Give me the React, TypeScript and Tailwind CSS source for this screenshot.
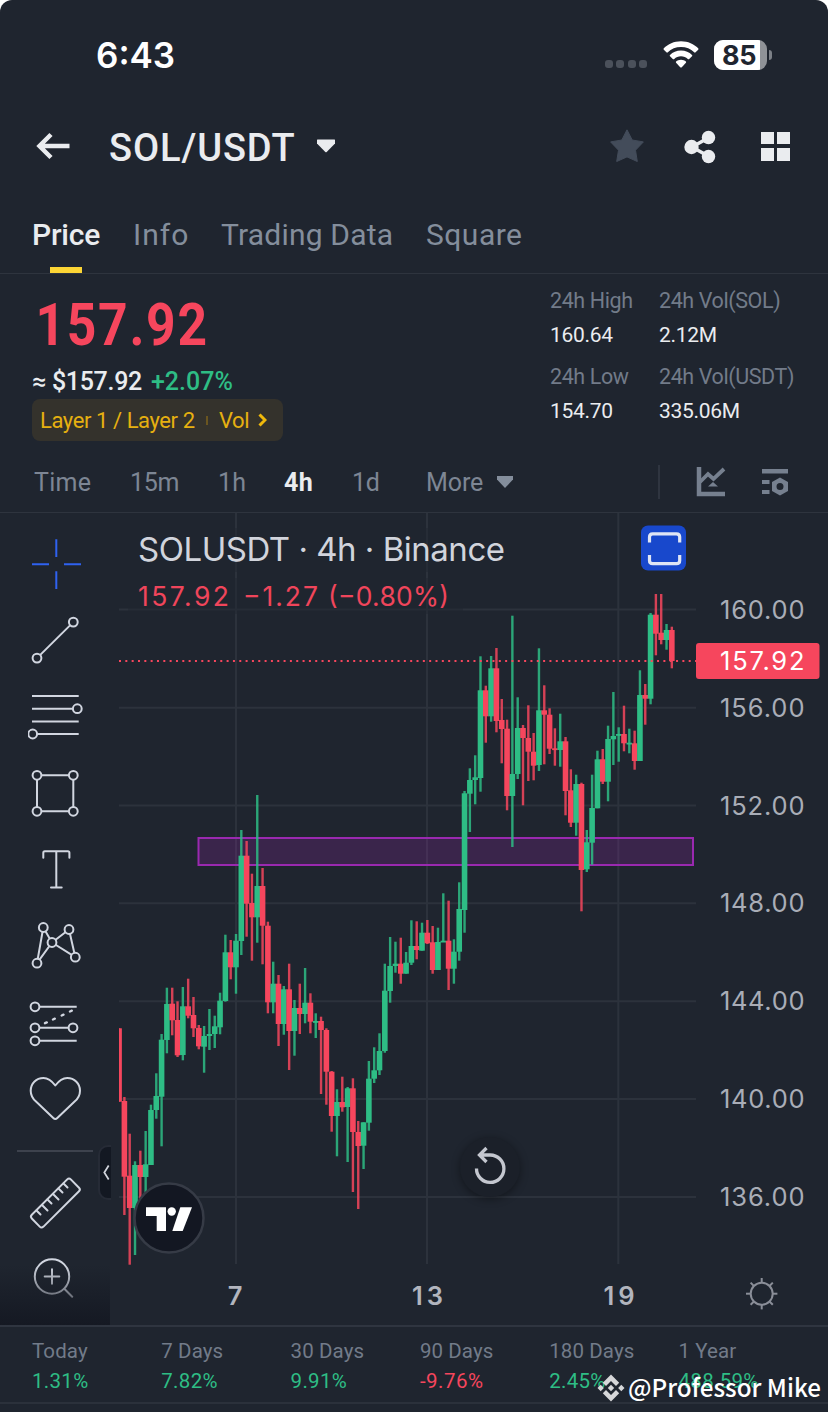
import type { ReactNode } from 'react';

type Candle = [high: number, top: number, bottom: number, low: number, up: 0 | 1];

// plot coordinates, one entry for each 4h candle
const candles: Candle[] = [
  [1028.3, 1028.3, 1101.7, 1101.7, 0], [1097, 1101, 1176.7, 1215, 0], [1133.7, 1175.7, 1208, 1264.7, 0],
  [1161.3, 1165, 1208, 1255, 1], [1150.7, 1165, 1177, 1199.3, 0], [1131, 1164.3, 1177, 1194, 1],
  [1104.7, 1110, 1165, 1165, 1], [1073.3, 1096, 1110, 1118.7, 1], [1034, 1039.7, 1096.7, 1146.3, 1],
  [987.7, 1004, 1040, 1053.3, 1], [987.7, 1003.7, 1020.3, 1035.3, 0], [1001.3, 1020, 1055.3, 1057, 0],
  [987, 1006.3, 1055, 1060.3, 1], [978.7, 1006.3, 1015.7, 1018.3, 0], [997, 1015, 1028.3, 1037, 0],
  [1025, 1028, 1046.3, 1049.3, 0], [1026, 1036, 1046.7, 1072.7, 1], [1009, 1034, 1036, 1050, 1],
  [1015.7, 1026.3, 1034, 1048, 1], [992.7, 1000.7, 1027.3, 1034.3, 1], [934.7, 952.3, 1001, 1001.7, 1],
  [940, 952.3, 967.3, 979.3, 0], [934, 940.7, 967.3, 993.7, 1], [830, 855.7, 941, 955, 1],
  [841, 855.7, 903.7, 936.7, 0], [873.7, 903, 917.3, 960.7, 0], [795, 886, 917.3, 942.7, 1],
  [868, 886, 925.7, 964.3, 0], [921.7, 925.7, 1002.3, 1013.3, 0], [961.7, 983.7, 1002.3, 1013.3, 1],
  [975, 983.7, 1024, 1046, 0], [986, 989.3, 1024, 1034.7, 1], [963.7, 989.3, 1031, 1070, 0],
  [1000, 1008, 1031, 1055.7, 1], [983.7, 1008, 1014, 1034, 0], [968, 1002.7, 1014, 1023.3, 1],
  [993.3, 1002.7, 1021.7, 1033.3, 0], [1013.3, 1021, 1022, 1038, 1], [1016.7, 1021, 1030, 1094, 0],
  [1028.3, 1030, 1071.7, 1104.7, 0], [1071, 1071.7, 1116, 1131.7, 0], [1089.3, 1102, 1116, 1156.3, 1],
  [1076.7, 1102, 1107.3, 1111.7, 0], [1087, 1088.3, 1107, 1162, 1], [1078.3, 1088.3, 1132, 1192, 0],
  [1121, 1132, 1146, 1209, 0], [1122.3, 1122.3, 1145.7, 1169, 1], [1061, 1078.7, 1122.7, 1130.7, 1],
  [1047.3, 1070.3, 1078.7, 1083, 1], [1033.3, 1051, 1070.3, 1075, 1], [963.7, 990.7, 1051, 1052.7, 1],
  [937, 966, 991, 1002.7, 1], [941.7, 963.7, 966, 972.7, 1], [937.7, 963.7, 973.7, 983.7, 0],
  [952, 962.7, 973.7, 973.7, 1], [920.3, 946, 962.7, 965, 1], [921.3, 946, 950, 959.3, 0],
  [922.7, 932.7, 950.7, 950.7, 1], [920, 932.7, 943.3, 944, 0], [926, 942.3, 970, 973.7, 0],
  [927.7, 942, 970, 970, 1], [893.3, 940.7, 942, 942, 1], [900.7, 940.7, 968.7, 990, 0],
  [939.3, 951.7, 968.7, 983.7, 1], [882.3, 909, 951.7, 960.7, 1], [791, 793.3, 910, 932.7, 1],
  [768.3, 780, 793.7, 832, 1], [755.3, 777.3, 780, 804.3, 1], [656.3, 690.3, 778, 791.7, 1],
  [685.7, 690.3, 716.3, 742.7, 0], [656, 668.3, 716.3, 721.7, 1], [648, 668.3, 721, 732.3, 0],
  [699, 720, 729, 763.3, 0], [719.7, 728.7, 796, 810.3, 0], [615.7, 774, 796, 847, 1],
  [697.3, 728, 774, 779, 1], [725, 728, 738, 805.3, 0], [705.3, 738, 751.7, 781, 0],
  [733, 751.7, 765.7, 780.3, 0], [648.3, 710.3, 765, 771, 1], [685.3, 710.3, 714.7, 764.3, 0],
  [708.3, 714.7, 748.7, 754, 0], [728.3, 748.3, 750, 765.7, 0], [713.7, 741.3, 750, 766.7, 1],
  [737, 741.3, 791, 815.3, 0], [769.3, 790.3, 822.7, 827, 0], [774.7, 784, 822.7, 835.7, 1],
  [782.7, 784, 870, 911.3, 0], [830, 842.3, 869.3, 872, 1], [774.7, 808, 842.7, 864.7, 1],
  [750.7, 759.3, 808.3, 808.3, 1], [749, 759.3, 781.7, 784, 0], [725.7, 739, 781.7, 801.3, 1],
  [692, 736, 739.3, 765, 1], [727.3, 734, 735.7, 761.7, 1], [705.7, 734, 743.3, 751.3, 0],
  [728.7, 742.7, 743.7, 753.3, 1], [730.7, 743.3, 761, 769.7, 0], [670.3, 695, 761, 761, 1],
  [684, 695, 698.7, 724.7, 0], [613, 614.7, 698.7, 704.3, 1], [594, 614.7, 633.7, 655.3, 0],
  [594, 632.7, 640, 644.3, 0], [624, 630, 640, 649.7, 1], [626.7, 630, 661, 668.3, 0],
];

const priceTicks = [
  { label: '160.00', y: 609.5 },
  { label: '156.00', y: 707.7 },
  { label: '152.00', y: 805.5 },
  { label: '148.00', y: 903.3 },
  { label: '144.00', y: 1001.3 },
  { label: '140.00', y: 1099 },
  { label: '136.00', y: 1197 },
];

const timeTicks = [
  { label: '7', x: 236 },
  { label: '13', x: 427 },
  { label: '19', x: 618.3 },
];

const performance = [
  { label: 'Today', value: '1.31%' },
  { label: '7 Days', value: '7.82%' },
  { label: '30 Days', value: '9.91%' },
  { label: '90 Days', value: '-9.76%' },
  { label: '180 Days', value: '2.45%' },
  { label: '1 Year', value: '488.59%' },
];

function Dot({ x, y }: { x: number; y: number }) {
  return <circle cx={x} cy={y} r="4.4" className="fill-[#1f252f]" />;
}

const tools: ReactNode[] = [
  <path key="cross" className="stroke-[#2f62f0]" strokeLinecap="butt" d="M-24 .2H-7M8 .2H25M.3 -24.8V-7M.3 7.2V25" />,
  <g key="line">
    <path d="M-19 17.1L17.3 -18.9" />
    <Dot x={-19} y={17.1} />
    <Dot x={17.3} y={-18.9} />
  </g>,
  <g key="fib">
    <path strokeLinecap="butt" d="M-24 -21H22.7M-24 -8.3H21M-24 4.4H22.7M-23 17H22.7" />
    <Dot x={21.3} y={-8.3} />
    <Dot x={-23.3} y={17} />
  </g>,
  <g key="rect">
    <path d="M-19 -18.7H17.3V17.3H-19Z" />
    <Dot x={-19} y={-18.7} />
    <Dot x={17.3} y={-18.7} />
    <Dot x={-19} y={17.3} />
    <Dot x={17.3} y={17.3} />
  </g>,
  <path key="text" d="M-12.7 -12.3V-17.3Q-12.7 -18.8 -11.2 -18.8H11.9Q13.4 -18.8 13.4 -17.3V-12.3M.3 -18.8V17.6M-5 17.6H5.7" />,
  <g key="pattern">
    <path d="M-12.7 -18.5L-19 17.2L-4 -3.5ZM13 -16.5L-4 -3.5L19.3 11.2Z" />
    <Dot x={-12.7} y={-18.5} />
    <Dot x={13} y={-16.5} />
    <Dot x={-4} y={-3.5} />
    <Dot x={-19} y={17.2} />
    <Dot x={19.3} y={11.2} />
  </g>,
  <g key="position">
    <path strokeLinecap="butt" d="M-21 -16.2H20.7M-21 4.8H17M-21 17.8H20.7" />
    <path strokeWidth="2.4" d="M-11 .2L-9.2 -.6M-3 -3.5L-1.2 -4.3M5.7 -7.5L7.5 -8.3M14 -11.5L15.8 -12.3" />
    <Dot x={-21} y={-16.2} />
    <Dot x={-21} y={4.8} />
    <Dot x={17} y={4.8} />
    <Dot x={-21} y={17.8} />
  </g>,
  <path key="heart" d="M-.7 -13.5C-4.5 -18.5 -8 -21 -12.5 -21C-20 -21 -25.3 -15.3 -25.3 -8.3C-25.3 -3.6 -23.3 -.4 -20 2.6L-2.7 19Q-.7 21 1.3 19L18.6 2.6C22 -.4 24 -3.6 24 -8.3C24 -15.3 18.6 -21 11.2 -21C6.6 -21 3.1 -18.5 -.7 -13.5Z" />,
];

function ToolIcon({ children }: { children: ReactNode }) {
  return (
    <svg
      viewBox="-28 -28 56 56"
      className="w-14 h-14 shrink-0 stroke-[#d1d6e0]"
      fill="none"
      strokeWidth="2"
      strokeLinecap="round"
      strokeLinejoin="round"
    >
      {children}
    </svg>
  );
}

function StatusBar() {
  return (
    <div className="h-[110px] flex items-center pl-[96px] pr-[56px]">
      <span className="font-['Inter'] font-semibold text-[35px] leading-none text-white">6:43</span>
      <div className="ml-auto flex items-center">
        <div className="flex gap-[3.3px] mt-[18px] mr-[16px]">
          {[0, 1, 2, 3].map((i) => (
            <span key={i} className="w-2 h-[7.5px] rounded-[3px] bg-[#4b515b]" />
          ))}
        </div>
        <svg viewBox="0 0 36 28" className="w-[36px] h-[28px] mr-[15px] fill-white">
          <path d="M18 0.2C25 0.2 31 3 35.2 7.3Q35.8 8 35.2 8.7L32.6 11.3Q31.9 12 31.2 11.3C27.7 7.9 23.2 6 18 6S8.3 7.9 4.8 11.3Q4.1 12 3.4 11.3L.8 8.7Q.2 8 .8 7.3C5 3 11 .2 18 .2Z" />
          <path d="M18 9.5C22.5 9.5 26.2 11.2 29 13.9Q29.7 14.6 29 15.3L26.2 18Q25.5 18.6 24.8 18C22.9 16.3 20.7 15.3 18 15.3S13.1 16.3 11.2 18Q10.5 18.6 9.8 18L7 15.3Q6.3 14.6 7 13.9C9.8 11.2 13.5 9.5 18 9.5Z" />
          <path d="M18 18.7C20 18.7 21.7 19.4 22.9 20.5Q23.5 21.1 22.9 21.8L18.8 26.2Q18 27 17.2 26.2L13.1 21.8Q12.5 21.1 13.1 20.5C14.3 19.4 16 18.7 18 18.7Z" />
        </svg>
        <div className="w-[53px] h-[30px] rounded-[9px] overflow-hidden bg-[#8f9297] flex">
          <div className="w-[46px] h-full bg-white flex items-center justify-center pl-[4px]">
            <span className="font-['Inter'] font-bold text-[27px] leading-none tracking-[-0.3px] text-[#1f252f]">85</span>
          </div>
        </div>
        <span className="ml-[2px] w-[3px] h-[10px] rounded-r-full bg-[#7c8087]" />
      </div>
    </div>
  );
}

function Header() {
  return (
    <header className="h-[74px] flex items-center pl-[36px] pr-[38px]">
      <svg viewBox="0 0 34 28" className="w-[34px] h-[28px] mb-[2px]" fill="none" stroke="#eaecef" strokeWidth="4.5">
        <path d="M33.5 14H4M15 2.5L3.5 14L15 25.5" />
      </svg>
      <h1 className="ml-[39px] mt-[2px] font-['Roboto'] font-medium text-[38px] leading-none tracking-[0.9px] text-[#eaecef]">SOL/USDT</h1>
      <svg viewBox="0 0 20 14" className="ml-[20px] w-[20px] h-[14px] mb-[2px] fill-[#eaecef]">
        <path d="M1.5 .5H18.5Q19 .5 19 1V4.5L10.7 13Q10 13.7 9.3 13L1 4.5V1Q1 .5 1.5 .5Z" />
      </svg>
      <svg viewBox="0 0 34 34" className="ml-auto mb-[2px] w-[34px] h-[34px] fill-[#434c5a]">
        <path d="M17 .8L22.2 11L33.4 12.9L25.5 21.2L27.3 32.5L17 27.9L6.7 32.5L8.5 21.2L.6 12.9L11.8 11Z" strokeWidth="1" strokeLinejoin="round" stroke="#434c5a" />
      </svg>
      <svg viewBox="0 0 34 34" className="ml-[39px] mr-[1px] mb-[1px] w-[34px] h-[34px] fill-[#eaecef] stroke-[#eaecef]">
        <path d="M9 17L26 7.5M9 17L26 26.5" strokeWidth="3.5" />
        <circle cx="8.5" cy="17" r="7.2" stroke="none" />
        <circle cx="25.5" cy="7.5" r="6.7" stroke="none" />
        <circle cx="25.5" cy="26.5" r="6.7" stroke="none" />
      </svg>
      <div className="ml-[43px] mb-[2px] grid grid-cols-2 gap-x-[3px] gap-y-[4px] w-[29px]">
        {[0, 1, 2, 3].map((i) => (
          <span key={i} className="h-[12.5px] bg-[#eaecef]" />
        ))}
      </div>
    </header>
  );
}

function Tabs() {
  return (
    <nav className="h-[90px] flex gap-[33px] pl-[32px] pt-[33px] border-b border-[#2e343e] font-['Roboto'] text-[30px] leading-[36px] text-[#848e9c]">
      <div className="relative w-[68px] font-medium tracking-[-0.2px] text-[#eaecef]">
        Price
        <span className="absolute left-[18px] bottom-0 w-8 h-[6px] bg-[#fcd535]" />
      </div>
      <span className="w-[55px] tracking-[1px]">Info</span>
      <span className="w-[172px] whitespace-nowrap tracking-[0.2px]">Trading Data</span>
      <span className="tracking-[0.5px]">Square</span>
    </nav>
  );
}

function Stat({ label, value }: { label: string; value: string }) {
  return (
    <div className="h-[76.5px] whitespace-nowrap">
      <div className="text-[21.5px] leading-[34px] tracking-[-0.4px] text-[#727b89]">{label}</div>
      <div className="text-[21px] leading-[34px] tracking-[-0.3px] text-[#eaecef]">{value}</div>
    </div>
  );
}

function Summary() {
  return (
    <section className="h-[177px] flex pl-[32px] font-['Roboto']">
      <div className="w-[518px] pt-[19px]">
        <div className="h-[64px] pl-[4px] font-bold text-[60px] leading-[64px] tracking-[2px] text-[#f6465d] origin-left scale-x-[0.86]">
          157.92
        </div>
        <div className="mt-[10px] h-[30px] flex gap-[9px] font-medium text-[25px] leading-[30px] whitespace-nowrap">
          <span className="tracking-[-0.3px] text-[#eaecef]">≈ $157.92</span>
          <span className="text-[#2ebd85]">+2.07%</span>
        </div>
        <div className="mt-[2px] w-[251px] h-[42px] rounded-lg bg-[#34322c] flex items-center pl-[8px] text-[22px] text-[#e6b010] whitespace-nowrap">
          <span className="w-[155px] tracking-[-0.42px]">Layer 1 / Layer 2</span>
          <span className="ml-[11px] w-[2px] h-[9px] bg-[#6a5520]" />
          <span className="ml-[11px] tracking-[-0.4px]">Vol</span>
          <svg viewBox="0 0 9 14" className="ml-[9px] w-[9px] h-[14px]" fill="none" stroke="#f0b90b" strokeWidth="3">
            <path d="M1.5 1.5L7 7L1.5 12.5" />
          </svg>
        </div>
      </div>
      <div className="pt-[9.5px] w-[109px]">
        <Stat label="24h High" value="160.64" />
        <Stat label="24h Low" value="154.70" />
      </div>
      <div className="pt-[9.5px]">
        <Stat label="24h Vol(SOL)" value="2.12M" />
        <Stat label="24h Vol(USDT)" value="335.06M" />
      </div>
    </section>
  );
}

function Intervals() {
  return (
    <div className="h-[62px] flex items-center border-b border-[#2e343e] pl-[34px] pr-[39px] font-['Roboto'] text-[25px] tracking-[0.3px] text-[#7d8694]">
      <div className="flex items-center pt-[3px]">
        <span className="w-[96px]">Time</span>
        <span className="w-[88px] tracking-[-0.3px]">15m</span>
        <span className="w-[66px]">1h</span>
        <span className="w-[68px] font-bold text-[#eaecef]">4h</span>
        <span className="w-[74px] tracking-[-0.3px]">1d</span>
        <span className="tracking-[-0.1px]">More</span>
      </div>
      <svg viewBox="0 0 18 14" className="ml-[13px] w-[18px] h-[14px] fill-[#848e9c]">
        <path d="M1 1H17V4.5L9 13L1 4.5Z" />
      </svg>
      <span className="ml-auto w-[2px] h-[34px] bg-[#2f3540]" />
      <svg viewBox="0 0 30 30" className="ml-[36px] w-[30px] h-[30px]" fill="none" stroke="#76808f" strokeWidth="4">
        <path d="M3 0V27H29" strokeWidth="4.5" />
        <path d="M4 15L12 7L17.5 12L28 2" strokeWidth="3.8" />
        <path d="M12 19.5L17 15L22 19.5Z" fill="#76808f" stroke="none" />
      </svg>
      <svg viewBox="0 0 28 28" className="ml-[35px] w-[28px] h-[28px] fill-[#76808f]">
        <path d="M1 1H27V5.5H1ZM1 12H8.5V16H1ZM1 22H8.5V26H1Z" />
        <path fillRule="evenodd" d="M19 9.5L27 14V23L19 27.5L11 23V14ZM19 15A3.5 3.5 0 1 0 19 22A3.5 3.5 0 1 0 19 15Z" />
      </svg>
    </div>
  );
}

function Toolbar() {
  return (
    <aside className="relative w-[110px] shrink-0">
      <div className="pt-[13.3px] pl-[2px] flex flex-col items-center">
        {tools.map((tool, i) => (
          <div key={i} className="h-[76.4px] flex items-center">
            <ToolIcon>{tool}</ToolIcon>
          </div>
        ))}
      </div>
      <div className="mt-[13px] ml-[17px] w-[76px] h-[2px] bg-[#3d424d]" />
      <div className="pt-[23px] pl-[2px] flex flex-col items-center gap-[20px]">
        <ToolIcon>
          <path d="M-24.2 11.8L11.2 -23.6Q13 -25.3 14.8 -23.6L23 -15.3Q24.8 -13.5 23 -11.7L-12.5 23.6Q-14.5 25.4 -16.3 23.6L-24.2 15.5Q-26 13.6 -24.2 11.8Z" />
          <path d="M-19.5 7.5L-15.5 11.5M-14 2L-8.5 7.5M-8.5 -3.5L-4.5 .5M-3 -9L2.5 -3.5M2.5 -14.5L6.5 -10.5M7.5 -19.5L11.5 -15.5" />
        </ToolIcon>
        <ToolIcon>
          <g transform="translate(-4 -2.5)">
            <circle r="17.2" />
            <path d="M-7.3 0H7.3M0 -7.3V7.3M12.3 12.3L20.2 20.2" />
          </g>
        </ToolIcon>
      </div>
      <div className="absolute inset-x-0 bottom-0 h-[60px] bg-linear-to-b from-transparent to-[#151923]" />
      <div className="absolute right-[-1px] top-[632px] w-[13px] h-[55px] rounded-l-[10px] border-2 border-r-0 border-[#262b36] bg-[#131822] flex items-center pl-[3px]">
        <svg viewBox="0 0 8 18" className="w-[7px] h-[17px]" fill="none" stroke="#d1d4dc" strokeWidth="2">
          <path d="M6.5 1L1.5 9L6.5 17" />
        </svg>
      </div>
    </aside>
  );
}

function Chart() {
  return (
    <div className="flex-1">
      <svg viewBox="110 513 718 812" className="block w-[718px] h-[812px] font-['Inter']">
        <defs>
          <clipPath id="plot">
            <rect x="119" y="513" width="577" height="752" />
          </clipPath>
        </defs>
        <g stroke="#2c323c" strokeWidth="2">
          {priceTicks.map((t) => (
            <line key={t.label} x1="119" x2="696" y1={t.y} y2={t.y} />
          ))}
          {timeTicks.map((t) => (
            <line key={t.label} x1={t.x} x2={t.x} y1="513" y2="1264" />
          ))}
        </g>
        <rect x="128" y="528" width="390" height="44" fill="#1f252f" fillOpacity="0.5" />
        <rect x="128" y="578" width="335" height="36" fill="#1f252f" fillOpacity="0.5" />
        <rect x="198.5" y="838" width="494.5" height="27" fill="#9c27b0" fillOpacity="0.22" stroke="#9a29b0" strokeWidth="2" />
        <g clipPath="url(#plot)">
          {candles.map(([high, top, bottom, low, up], i) => {
            const x = 236 + (i - 22) * 5.315;
            return (
              <g key={i} className={up ? 'fill-[#2ebd85]' : 'fill-[#f6465d]'}>
                <rect x={x - 1.2} y={high} width="2.4" height={low - high} fillOpacity="0.85" />
                <rect x={x - 2.8} y={top} width="5.6" height={Math.max(bottom - top, 1.8)} />
              </g>
            );
          })}
        </g>
        <line x1="119" x2="696" y1="661" y2="661" stroke="#f6465d" strokeWidth="2" strokeDasharray="2 4.33" />

        <g fill="#a9adb7" fontSize="25.5">
          {priceTicks.map((t) => (
            <text key={t.label} x="720" y={t.y + 9} textLength="84.5">{t.label}</text>
          ))}
        </g>
        <rect x="696" y="643" width="123.5" height="36" rx="3" fill="#f6465d" />
        <text x="720" y="670.3" fontSize="25.5" fill="#fff" textLength="84.5">157.92</text>
        <g fill="#b2b5be" fontSize="25.5" fontWeight="600" textAnchor="middle">
          <text x="235" y="1305">7</text>
          <text x="427.5" y="1305" textLength="31">13</text>
          <text x="619" y="1305" textLength="31">19</text>
        </g>

        <text x="138" y="560.8" fontSize="33" fill="#d1d4dc" textLength="367">SOLUSDT · 4h · Binance</text>
        <g fill="#f0455b" fontSize="26.5">
          <text x="138" y="606.3" textLength="91">157.92</text>
          <text x="243" y="606.3" textLength="75">−1.27</text>
          <text x="328" y="606.3" textLength="121">(−0.80%)</text>
        </g>

        <rect x="641" y="525.5" width="45" height="45" rx="7" fill="#1848cc" />
        <path d="M649.5 542.5V537Q649.5 533.8 652.7 533.8H676.5Q679.7 533.8 679.7 537V542.5M649.5 555V560.5Q649.5 563.7 652.7 563.7H676.5Q679.7 563.7 679.7 560.5V555" fill="none" stroke="#dfe5f5" strokeWidth="3.2" />

        <circle cx="169" cy="1218" r="34.5" fill="#131722" stroke="#363b46" strokeWidth="2.5" />
        <g fill="#fff">
          <path d="M146 1207.3H166V1231H156.7V1216H146Z" />
          <circle cx="171.7" cy="1211.5" r="4.2" />
          <path d="M180.3 1207.3H192L182.7 1231H172.3Z" />
        </g>

        <circle cx="490" cy="1167" r="30" fill="#1b2029" className="drop-shadow-[0_2px_4px_rgba(0,0,0,0.4)]" />
        <path d="M476.5 1168.5A13.7 13.7 0 1 0 490.2 1155H479.5M486.5 1148L479.5 1155L486.5 1162" fill="none" stroke="#c4c7cf" strokeWidth="3.3" />

        <g fill="none" stroke="#8a8e98" strokeWidth="2">
          <circle cx="761.7" cy="1293.7" r="11" />
          {[0, 45, 90, 135, 180, 225, 270, 315].map((a) => (
            <line key={a} x1="761.7" x2="761.7" y1="1282.7" y2="1278" transform={`rotate(${a} 761.7 1293.7)`} />
          ))}
        </g>
      </svg>
    </div>
  );
}

function Performance() {
  return (
    <footer className="relative h-[87px] border-t-2 border-[#2f3540] font-['Roboto'] text-[20.5px]">
      <div className="h-[77px] pt-[9px] pl-[32px] flex border-b-2 border-[#2b313b]">
        {performance.map((p) => (
          <div key={p.label} className="w-[129.3px] shrink-0 whitespace-nowrap tracking-[0.1px]">
            <div className="leading-[30px] text-[#727b89]">{p.label}</div>
            <div className={p.value.startsWith('-') ? 'leading-[30px] tracking-[0.5px] text-[#f6465d]' : 'leading-[30px] tracking-[0.3px] text-[#2ebd85]'}>
              {p.value}
            </div>
          </div>
        ))}
      </div>
      <div className="absolute left-[597px] top-[43px] h-[36px] flex items-center gap-[3px] text-white">
        <svg viewBox="0 0 28 28" className="w-[28px] h-[28px] shrink-0 fill-[#d6d7d9]">
          <path d="M14 .5L22.2 8.7L19 11.9L14 6.9L9 11.9L5.8 8.7ZM14 27.5L5.8 19.3L9 16.1L14 21.1L19 16.1L22.2 19.3ZM3.7 10.8L6.9 14L3.7 17.2L.5 14ZM24.3 10.8L27.5 14L24.3 17.2L21.1 14ZM14 10.8L17.2 14L14 17.2L10.8 14Z" />
        </svg>
        <span className="mb-[3px] font-['Noto_Sans_CJK_SC',sans-serif] text-[24.2px] leading-[36px] font-medium whitespace-nowrap">@Professor Mike</span>
      </div>
    </footer>
  );
}

export default function App() {
  return (
    <div className="bg-white">
      <main className="w-[828px] h-[1412px] overflow-hidden rounded-t-[12px] bg-[#1f252f]">
        <StatusBar />
        <Header />
        <Tabs />
        <Summary />
        <Intervals />
        <div className="flex h-[812px]">
          <Toolbar />
          <Chart />
        </div>
        <Performance />
      </main>
    </div>
  );
}
